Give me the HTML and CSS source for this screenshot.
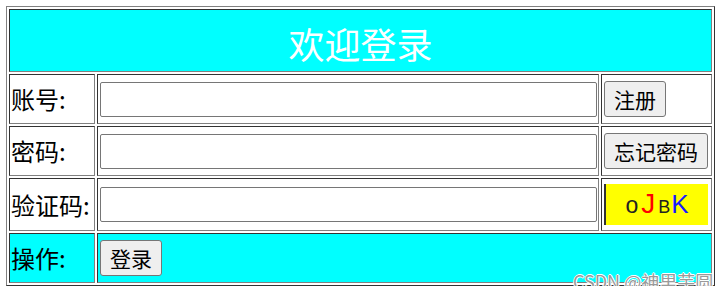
FILE: index.html
```html
<!DOCTYPE html>
<html lang="zh">
<head>
<meta charset="utf-8">
<title>欢迎登录</title>
<link rel="stylesheet" href="styles.css">
</head>
<body>
<table class="login">
  <colgroup>
    <col class="c-label">
    <col class="c-input">
    <col class="c-side">
  </colgroup>
  <tr class="r-head">
    <td colspan="3" class="head">欢迎登录</td>
  </tr>
  <tr class="r-row">
    <td class="label">账号:</td>
    <td class="field"><input class="text" type="text"></td>
    <td class="side"><button class="btn">注册</button></td>
  </tr>
  <tr class="r-row">
    <td class="label">密码:</td>
    <td class="field"><input class="text" type="password"></td>
    <td class="side"><button class="btn">忘记密码</button></td>
  </tr>
  <tr class="r-code">
    <td class="label">验证码:</td>
    <td class="field"><input class="text" type="text"></td>
    <td class="side"><div class="captcha"><span class="ch-o">o</span><span class="ch-j">J</span><span class="ch-b">B</span><span class="ch-k">K</span></div></td>
  </tr>
  <tr class="r-row">
    <td class="label cyan">操作:</td>
    <td colspan="2" class="field cyan"><button class="btn">登录</button></td>
  </tr>
</table>
<div class="watermark">CSDN @神里芋圆</div>
</body>
</html>
```
FILE: styles.css
```css
html, body {
  background: #ffffff;
}
body {
  margin: 6px;
  font-family: "Noto Sans CJK SC", "Liberation Sans", sans-serif;
  color: #000;
  position: relative;
}
.login {
  border-collapse: separate;
  border-spacing: 2px;
  border: 1px solid;
  border-color: #808080 #333333 #333333 #808080;
  table-layout: fixed;
  width: 709px;
}
.c-label { width: 86px; }
.c-input { width: 502px; }
.c-side { width: 111px; }
.login td {
  border: 1px solid;
  border-color: #333333 #808080 #808080 #333333;
  padding: 1px;
  vertical-align: middle;
}
.r-head { height: 63px; }
.r-row { height: 50px; }
.r-code { height: 53px; }
.login td.head {
  background: #00ffff;
  color: #ffffff;
  text-align: center;
  font-size: 36px;
  line-height: 44px;
  padding-top: 4px;
  padding-bottom: 0;
}
.label {
  font-size: 24px;
  line-height: 32px;
  white-space: nowrap;
  overflow: visible;
  padding-left: 2px;
}
.cyan {
  background: #00ffff;
}
.text {
  display: block;
  box-sizing: border-box;
  width: 497px;
  height: 35px;
  margin: 0 0 0 1px;
  border: 1px solid #767676;
  border-radius: 2px;
  background: #fff;
  font-size: 20px;
  padding: 0 4px;
}
.btn {
  display: block;
  margin: 0 0 0 1px;
  box-sizing: border-box;
  height: 36px;
  padding: 0 9px;
  border: 1px solid #767676;
  border-radius: 3px;
  background: #efefef;
  color: #000;
  font-family: "Noto Sans CJK SC", sans-serif;
  font-size: 21px;
  line-height: 32px;
  white-space: nowrap;
}
.captcha {
  box-sizing: border-box;
  width: 104px;
  height: 41px;
  margin-left: 1px;
  background: #ffff00;
  border-left: 2px solid #333333;
  text-align: center;
  font-family: "Liberation Sans", sans-serif;
  line-height: 36px;
  padding-top: 2px;
  white-space: nowrap;
}
.captcha span {
  vertical-align: baseline;
}
.ch-o { font-size: 23px; color: #222; margin-right: 3px; }
.ch-j { font-size: 28px; color: #ff0000; margin-right: 3px; }
.ch-b { font-size: 18px; color: #222; margin-right: 1px; }
.ch-k { font-size: 26px; color: #1a1aff; }
.watermark {
  position: absolute;
  left: 567px;
  top: 264px;
  font-family: "Noto Sans CJK SC", "Liberation Sans", sans-serif;
  font-size: 18px;
  line-height: 22px;
  color: #9a9a9a;
  text-shadow: 1px 0 0 #fff, -1px 0 0 #fff, 0 1px 0 #fff, 0 -1px 0 #fff;
  white-space: nowrap;
}
```
